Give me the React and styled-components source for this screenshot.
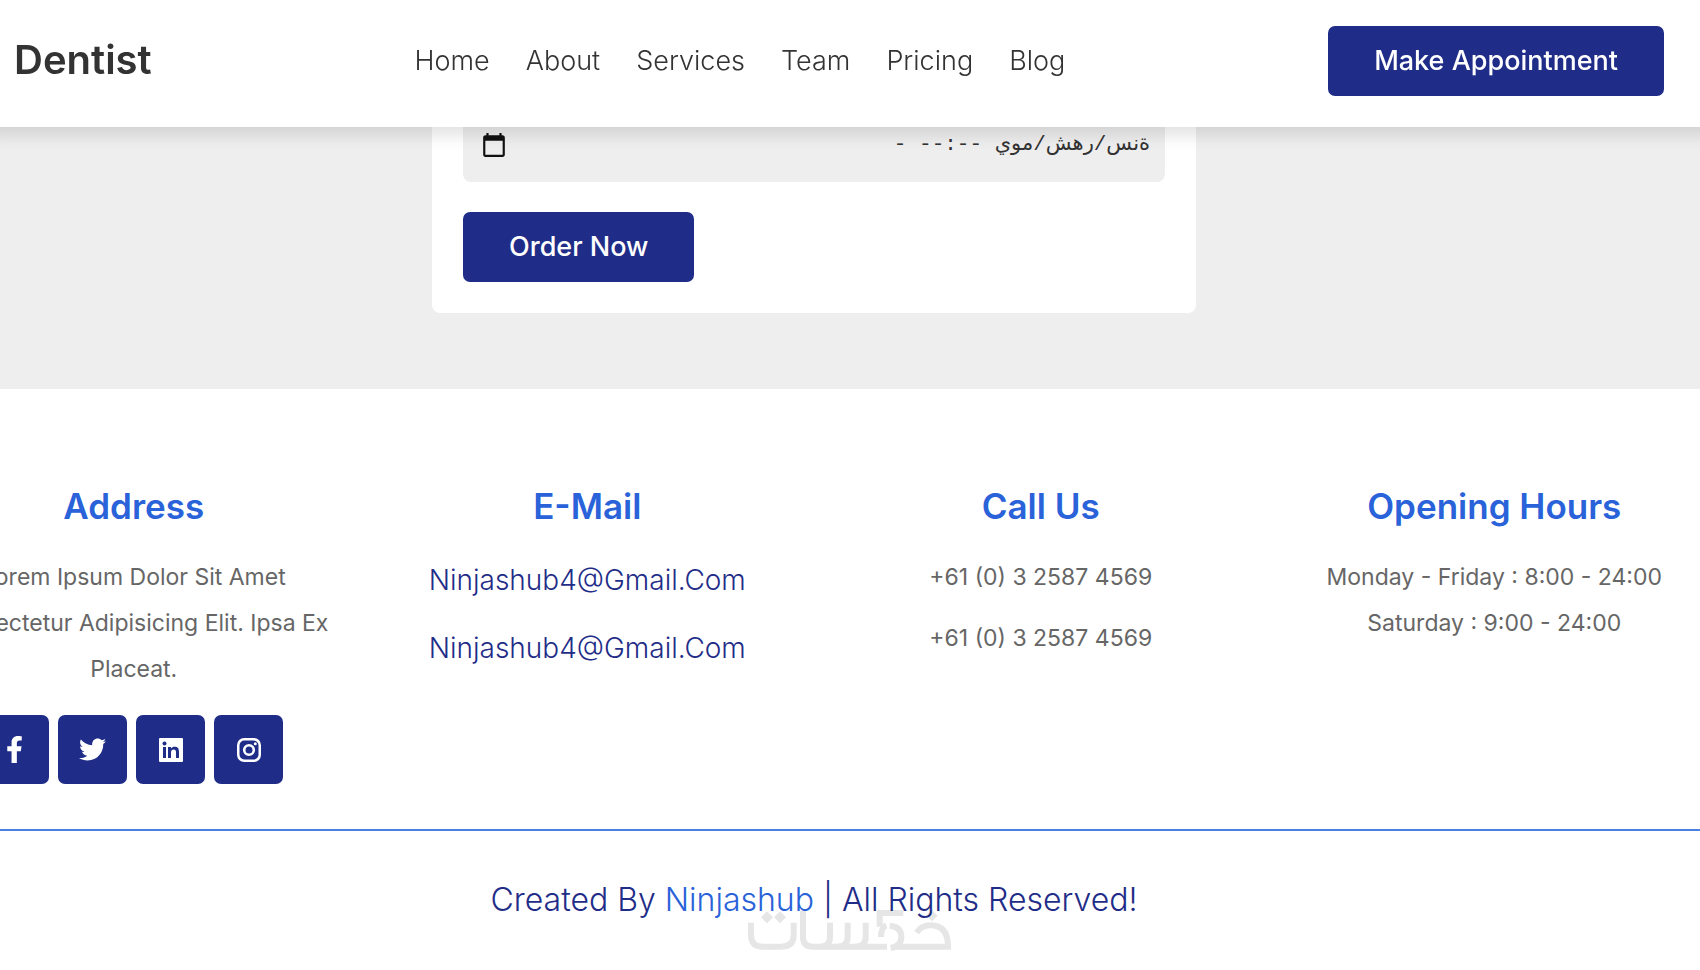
import React from "react";
import styled, { createGlobalStyle } from "styled-components";
import { FaFacebookF, FaTwitter } from "react-icons/fa";

const navy = "#1f2d88";
const blue = "#2962d9";

const GlobalStyle = createGlobalStyle`
  *, *::before, *::after { box-sizing: border-box; margin: 0; padding: 0; }
  body { background: #fff; overflow-x: hidden; font-family: Inter, "Liberation Sans", sans-serif; }
  a { text-decoration: none; }
`;

const Page = styled.div`
  margin-left: -72px;
`;

const Header = styled.header`
  position: fixed;
  z-index: 10;
  top: 0;
  left: 0;
  right: 0;
  display: flex;
  align-items: flex-start;
  justify-content: space-between;
  padding: 26px 36px 31px 14px;
  background: #fff;
  box-shadow: 0 -8px 16px 16px rgba(0, 0, 0, 0.12);
`;

const Logo = styled.a`
  font-size: 40px;
  font-weight: 600;
  line-height: 68px;
  color: #333;
`;

const Nav = styled.nav`
  display: flex;
  gap: 36px;
`;

const NavLink = styled.a`
  font-size: 27px;
  font-weight: 300;
  line-height: 70px;
  color: #333;
`;

const Button = styled.button`
  padding: 0 46px;
  border: 0;
  border-radius: 7px;
  background: ${navy};
  color: #fff;
  font-family: inherit;
  font-size: 27px;
  font-weight: 500;
  line-height: 70px;
  white-space: nowrap;
  cursor: pointer;
`;

const Booking = styled.section`
  display: flex;
  justify-content: center;
  padding-bottom: 76px;
  background: #eee;
`;

const Card = styled.form`
  display: flex;
  flex-direction: column;
  align-items: flex-start;
  gap: 30px;
  width: 764px;
  padding: 110px 31px 31px;
  border-radius: 8px;
  background: #fff;
`;

const Field = styled.div`
  display: flex;
  align-items: center;
  width: 100%;
  height: 72px;
  padding: 0 15px 3px 18px;
  border-radius: 8px;
  background: #eee;
`;

const PickerButton = styled.button`
  display: flex;
  border: 0;
  background: none;
  cursor: pointer;
`;

const DateInput = styled.input`
  flex: 1;
  min-width: 0;
  border: 0;
  outline: 0;
  background: none;
  color: #333;
  font-family: "Liberation Mono", "DejaVu Sans", sans-serif;
  font-size: 21px;
  line-height: 32px;
`;

const Footer = styled.footer`
  padding-top: 93px;
`;

const Columns = styled.div`
  display: grid;
  grid-template-columns: repeat(4, minmax(0, 1fr));
  gap: 42px;
  padding-bottom: 45px;
  border-bottom: 2px solid #4a80e0;
`;

const Column = styled.section`
  display: flex;
  flex-direction: column;
  align-items: center;
  text-align: center;
`;

const Title = styled.h3`
  margin-bottom: 24px;
  font-size: 35px;
  font-weight: 600;
  line-height: 48px;
  white-space: nowrap;
  color: ${blue};
`;

const Text = styled.p`
  font-size: 23px;
  font-weight: 400;
  line-height: 46px;
  white-space: nowrap;
  color: #666;
`;

const Stack = styled.div`
  display: flex;
  flex-direction: column;
  gap: 15px;
`;

const MailLink = styled.a`
  font-size: 28px;
  font-weight: 300;
  line-height: 53px;
  color: ${navy};
`;

const Socials = styled.div`
  display: flex;
  gap: 9px;
  margin-top: 23px;
  padding-right: 4px;
`;

const SocialLink = styled.a`
  display: flex;
  align-items: center;
  justify-content: center;
  width: 69px;
  height: 69px;
  border-radius: 7px;
  background: ${navy};
  color: #fff;
  font-size: 27px;
`;

const Credit = styled.p`
  padding: 45px 0 43px;
  font-size: 32px;
  font-weight: 300;
  line-height: 48px;
  text-align: center;
  color: ${navy};

  a { color: ${blue}; }
`;

const Watermark = styled.svg`
  position: fixed;
  bottom: 16px;
  left: 50%;
  width: 212px;
  height: 50px;
  transform: translateX(-50%);
  mix-blend-mode: multiply;
  pointer-events: none;
`;

const links = ["Home", "About", "Services", "Team", "Pricing", "Blog"];

function LinkedinIcon() {
  return (
    <svg width="24" height="24" viewBox="0 0 24 24" aria-hidden="true">
      <rect width="24" height="24" rx="1" fill="#fff" />
      <g fill={navy}>
        <circle cx="5.500" cy="5.500" r="2" />
        <path d="M4 9h3v11H4zM9 9h3v1.500c.8-1.200 2-1.800 3.600-1.800 3.200 0 4.400 1.900 4.400 5V20h-3v-5.600c0-1.800-.6-2.900-2.200-2.900-1.800 0-2.800 1.200-2.800 3.100V20H9z" />
      </g>
    </svg>
  );
}

function InstagramIcon() {
  return (
    <svg width="24" height="24" viewBox="0 0 24 24" fill="none" stroke="#fff" aria-hidden="true">
      <rect x="1.250" y="1.250" width="21.500" height="21.500" rx="6" strokeWidth="2.500" />
      <circle cx="12" cy="12" r="4.800" strokeWidth="2.600" />
      <circle cx="18.300" cy="5.700" r="1.500" fill="#fff" stroke="none" />
    </svg>
  );
}

const socials = [
  ["Facebook", FaFacebookF],
  ["Twitter", FaTwitter],
  ["LinkedIn", LinkedinIcon],
  ["Instagram", InstagramIcon],
];

function CalendarIcon() {
  return (
    <svg width="26" height="26" viewBox="0 0 24 24" fill="#111" aria-hidden="true">
      <path d="M20 3h-1V1h-2v2H7V1H5v2H4c-1.100 0-2 .9-2 2v16c0 1.100.9 2 2 2h16c1.100 0 2-.9 2-2V5c0-1.100-.9-2-2-2zm0 18H4V8h16v13z" />
    </svg>
  );
}

function KhamsatMark() {
  return (
    <Watermark viewBox="0 0 636 150" role="img" aria-label="Khamsat">
      <g fill="none" stroke="#e6e6e6" strokeWidth="18">
        <path d="M21 56V92Q21 128 57 128H112Q149 128 149 94V56" />
        <path d="M177 20V98Q177 128 207 128H429" />
        <path d="M258 56V98Q258 128 228 128M311 56V98Q311 128 281 128M365 56V98Q365 128 335 128" />
        <path d="M407 68V27H478" />
        <path d="M411 99Q411 70 427 64" />
        <path d="M437 65Q472 68 472 98Q472 126 440 132" />
        <path d="M455 128H612Q612 64 560 64Q532 64 518 86" />
      </g>
      <g fill="#e6e6e6">
        <path d="M69 22l18 18-18 18-18-18zM108 22l18 18-18 18-18-18zM564 18l17 17-17 17-17-17z" />
      </g>
    </Watermark>
  );
}

export default function App() {
  return (
    <>
      <GlobalStyle />
      <Header>
        <Logo href="#home">Dentist</Logo>
        <Nav>
          {links.map((name) => (
            <NavLink key={name} href={`#${name.toLowerCase()}`}>{name}</NavLink>
          ))}
        </Nav>
        <Button type="button">Make Appointment</Button>
      </Header>
      <Page>
        <Booking>
          <Card onSubmit={(e) => e.preventDefault()}>
            <Field>
              <PickerButton type="button" aria-label="Pick a date">
                <CalendarIcon />
              </PickerButton>
              <DateInput dir="rtl" aria-label="Appointment date" defaultValue="ةنس/رهش/موي --:-- -" />
            </Field>
            <Button type="submit">Order Now</Button>
          </Card>
        </Booking>
        <Footer>
          <Columns>
            <Column>
              <Title>Address</Title>
              <Text>
                Lorem Ipsum Dolor Sit Amet
                <br />
                Consectetur Adipisicing Elit. Ipsa Ex
                <br />
                Placeat.
              </Text>
              <Socials>
                {socials.map(([name, Icon]) => (
                  <SocialLink key={name} href={`#${name.toLowerCase()}`} aria-label={name}>
                    <Icon />
                  </SocialLink>
                ))}
              </Socials>
            </Column>
            <Column>
              <Title>E-Mail</Title>
              <Stack>
                <MailLink href="mailto:ninjashub4@gmail.com">Ninjashub4@Gmail.Com</MailLink>
                <MailLink href="mailto:ninjashub4@gmail.com">Ninjashub4@Gmail.Com</MailLink>
              </Stack>
            </Column>
            <Column>
              <Title>Call Us</Title>
              <Stack>
                <Text>+61 (0) 3 2587 4569</Text>
                <Text>+61 (0) 3 2587 4569</Text>
              </Stack>
            </Column>
            <Column>
              <Title>Opening Hours</Title>
              <Text>
                Monday - Friday : 8:00 - 24:00
                <br />
                Saturday : 9:00 - 24:00
              </Text>
            </Column>
          </Columns>
          <Credit>
            Created By <a href="#ninjashub">Ninjashub</a> | All Rights Reserved!
          </Credit>
        </Footer>
      </Page>
      <KhamsatMark />
    </>
  );
}
